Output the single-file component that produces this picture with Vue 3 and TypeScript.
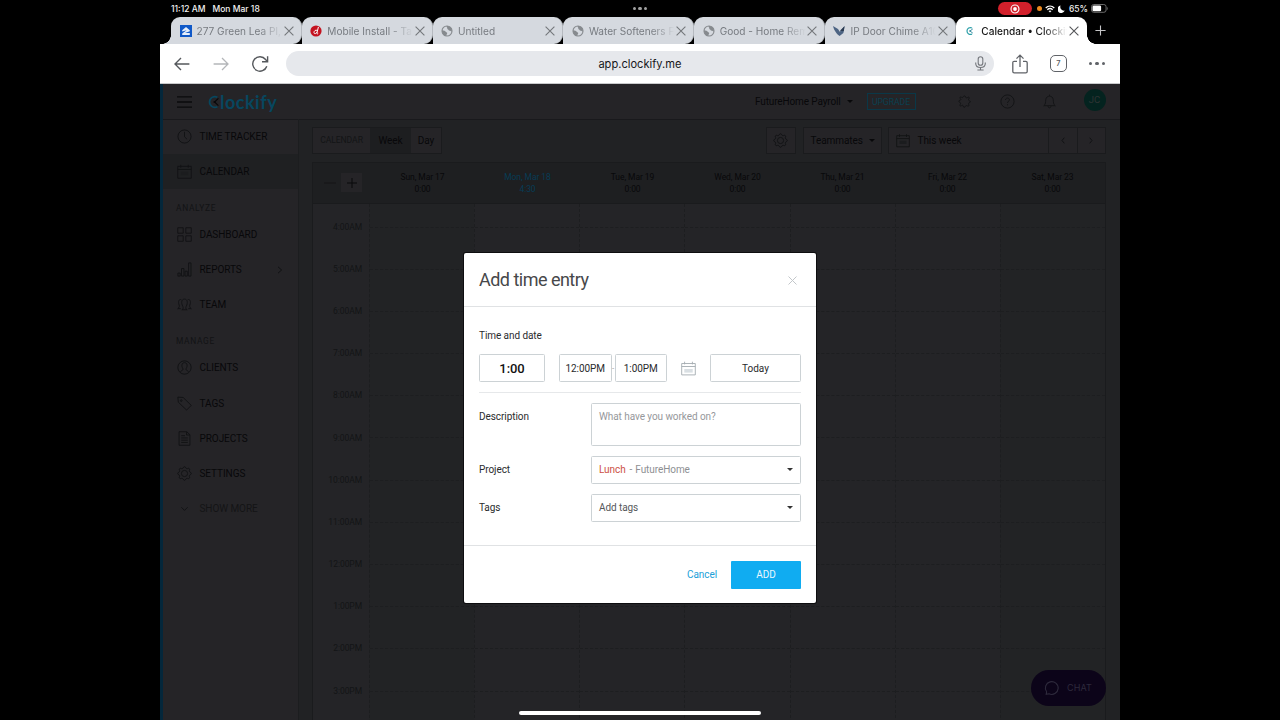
<script setup lang="ts">
interface Tab { title: string; icon: string; active?: boolean }
interface NavItem { label: string; icon: string; active?: boolean; arrow?: boolean; muted?: boolean }
interface NavGroup { heading?: string; items: NavItem[] }
interface Day { name: string; total: string; today?: boolean; weekend?: boolean }

const tabs: Tab[] = [
  { title: '277 Green Lea Pl,', icon: 'home' },
  { title: 'Mobile Install - Ta', icon: 'install' },
  { title: 'Untitled', icon: 'globe' },
  { title: 'Water Softeners F', icon: 'globe' },
  { title: 'Good - Home Rem', icon: 'globe' },
  { title: 'IP Door Chime A10', icon: 'bird' },
  { title: 'Calendar • Clockif', icon: 'clockify', active: true },
]

const groups: NavGroup[] = [
  { items: [{ label: 'TIME TRACKER', icon: 'clock' }, { label: 'CALENDAR', icon: 'calendar', active: true }] },
  {
    heading: 'ANALYZE',
    items: [
      { label: 'DASHBOARD', icon: 'grid' },
      { label: 'REPORTS', icon: 'bars', arrow: true },
      { label: 'TEAM', icon: 'team' },
    ],
  },
  {
    heading: 'MANAGE',
    items: [
      { label: 'CLIENTS', icon: 'client' },
      { label: 'TAGS', icon: 'tag' },
      { label: 'PROJECTS', icon: 'doc' },
      { label: 'SETTINGS', icon: 'gear' },
      { label: 'SHOW MORE', icon: 'down', muted: true },
    ],
  },
]

const days: Day[] = [
  { name: 'Sun, Mar 17', total: '0:00', weekend: true },
  { name: 'Mon, Mar 18', total: '4:30', today: true },
  { name: 'Tue, Mar 19', total: '0:00' },
  { name: 'Wed, Mar 20', total: '0:00' },
  { name: 'Thu, Mar 21', total: '0:00' },
  { name: 'Fri, Mar 22', total: '0:00' },
  { name: 'Sat, Mar 23', total: '0:00', weekend: true },
]

const hours: string[] = ['4:00AM', '5:00AM', '6:00AM', '7:00AM', '8:00AM', '9:00AM', '10:00AM', '11:00AM', '12:00PM', '1:00PM', '2:00PM', '3:00PM']

const gearPath = 'M8 .8 C9.2 .8 9 2.3 10.2 2.7 C11.4 3.2 12.3 1.9 13.1 2.8 C14 3.7 12.8 4.6 13.3 5.8 C13.7 7 15.2 6.8 15.2 8 C15.2 9.2 13.7 9 13.3 10.2 C12.8 11.4 14 12.3 13.1 13.1 C12.3 14 11.4 12.8 10.2 13.3 C9 13.7 9.2 15.2 8 15.2 C6.8 15.2 7 13.7 5.8 13.3 C4.6 12.8 3.7 14 2.8 13.1 C1.9 12.3 3.2 11.4 2.7 10.2 C2.3 9 .8 9.2 .8 8 C.8 6.8 2.3 7 2.7 5.8 C3.2 4.6 1.9 3.7 2.8 2.8 C3.7 1.9 4.6 3.2 5.8 2.7 C7 2.3 6.8 .8 8 .8Z'
const personPath = 'M8 2.8 C5.6 2.8 4.9 5 5.3 6.8 C5.6 8.4 6.6 9 6.3 10.3 C6 11.3 4.6 11.3 3.6 12.4 M8 2.8 C10.4 2.8 11.1 5 10.7 6.8 C10.4 8.4 9.4 9 9.7 10.3 C10 11.3 11.4 11.3 12.4 12.4'
</script>

<template>
  <div class="stage">
    <div class="device">
      <div class="status">
        <div class="status-left"><span>11:12 AM</span><span>Mon Mar 18</span></div>
        <div class="dots3"><i></i><i></i><i></i></div>
        <div class="status-right">
          <span class="rec">
            <svg width="10" height="10" viewBox="0 0 10 10"><circle cx="5" cy="5" r="4" fill="none" stroke="#fff" stroke-width="1.1" /><circle cx="5" cy="5" r="1.9" fill="#fff" /></svg>
          </span>
          <span class="orange"></span>
          <svg class="wifi" width="10" height="8" viewBox="0 0 10 8"><path d="M.7 2.9 C3.2 .6 6.8 .6 9.3 2.9 M2.3 4.7 C3.9 3.3 6.1 3.3 7.7 4.7" fill="none" stroke="#fff" stroke-width="1.3" /><path d="M3.5 5.9 C4.4 5.2 5.6 5.2 6.5 5.9 L5 7.5 Z" fill="#fff" /></svg>
          <svg class="moon" width="7" height="8" viewBox="0 0 7 8"><path d="M2.6 .5 A3.8 3.8 0 1 0 6.8 5.6 A3.7 3.7 0 0 1 2.6 .5" fill="#fff" /></svg>
          <span class="pct">65%</span>
          <svg width="18" height="9" viewBox="0 0 18 9"><rect x=".5" y=".5" width="14.6" height="7.8" rx="2.3" fill="none" stroke="#6b6b6b" /><rect x="1.5" y="1.5" width="8.6" height="5.8" rx="1.3" fill="#fff" /><path d="M16.3 3 V6 C17.3 5.6 17.3 3.4 16.3 3" fill="#6b6b6b" /></svg>
        </div>
      </div>

      <div class="tabs">
        <div v-for="tab in tabs" :key="tab.title" class="tab" :class="{ active: tab.active }">
          <svg v-if="tab.icon === 'home'" class="fav" viewBox="0 0 12 12"><rect width="12" height="12" fill="#1059c8" /><path d="M2.2 5.2 L6 2 L9.8 5.2 V6.2 L5 8 H9.8 V10 H2.2 V8.4 L6.6 5.3 L2.2 6.6Z" fill="#e7effb" /></svg>
          <svg v-else-if="tab.icon === 'install'" class="fav" viewBox="0 0 12 12"><circle cx="6" cy="6" r="5.6" fill="#c4121f" /><path d="M8.4 2 L6.9 8.1 C6.8 9 7.6 9 8.2 8.4 M7.2 5.5 C5.7 4.4 3.9 6 4 7.7 C4.2 9.3 6.3 8.8 7 7" fill="none" stroke="#fff" stroke-width="1" /></svg>
          <svg v-else-if="tab.icon === 'globe'" class="fav" viewBox="0 0 12 12"><circle cx="6" cy="6" r="5" fill="none" stroke="#868a8e" stroke-width="1.1" /><path d="M1 5.2 C2.8 5.4 4.2 5.6 4.5 6.6 C4.7 7.5 6 7 6.2 8 C6.3 9 5.3 9.2 5.4 11 C2.6 10.8 .8 8.3 1 5.2Z M5.6 1 C5.2 2.2 6.5 2.5 6.3 3.5 C6 4.5 7.3 4.2 7.5 5.1 C7.8 6.2 9.6 5.6 10.8 6.8 C11.5 3.5 8.8 .8 5.6 1Z" fill="#868a8e" /></svg>
          <svg v-else-if="tab.icon === 'bird'" class="fav" viewBox="0 0 12 12"><path d="M0 1 L5 4 L6.8 6.8 L11.5 1.2 L10.4 8 L6.6 11 C4 9 1.5 6.6 0 1Z" fill="#4d6483" /><path d="M7 5.8 L11.6 1 L10.8 6.2Z" fill="#2b3b52" /></svg>
          <svg v-else class="fav" viewBox="0 0 12 12"><path d="M8 3 A3.4 3.4 0 1 0 8 9" fill="none" stroke="#2a9fa8" stroke-width="1.2" /><path d="M6 6 L8.8 3.9 M6 6 L8.8 8.1" stroke="#3b8fa5" stroke-width="1" /><circle cx="5.9" cy="6" r=".8" fill="#347b8d" /></svg>
          <span class="tab-title">{{ tab.title }}</span>
          <svg class="tab-x" viewBox="0 0 10 10"><path d="M.6 .6 L9.4 9.4 M9.4 .6 L.6 9.4" /></svg>
        </div>
        <svg class="plus" viewBox="0 0 11 11"><path d="M5.5 .4 V10.6 M.4 5.5 H10.6" stroke="#c4c4c6" stroke-width="1.1" /></svg>
      </div>

      <div class="toolbar">
        <svg class="t-back" width="16" height="14" viewBox="0 0 16 14"><path d="M15.4 7 H1 M7 1 L1 7 L7 13" fill="none" stroke="#55585c" stroke-width="1.4" /></svg>
        <svg class="t-fwd" width="16" height="14" viewBox="0 0 16 14"><path d="M.6 7 H15 M9 1 L15 7 L9 13" fill="none" stroke="#b4b6b9" stroke-width="1.3" /></svg>
        <svg class="t-reload" width="18" height="18" viewBox="0 0 18 18"><path d="M15.8 11.2 A7.2 7.2 0 1 1 14.6 4.5 L16.4 6.6 M16.6 1.2 V6.8 H11" fill="none" stroke="#55585c" stroke-width="1.4" /></svg>
        <div class="address">
          <span>app.clockify.me</span>
          <svg class="mic" width="11" height="15" viewBox="0 0 11 15"><rect x="3.2" y=".7" width="4.6" height="8.6" rx="2.3" fill="none" stroke="#74777c" stroke-width="1.1" /><path d="M.7 6.4 V7.2 C.7 13 10.3 13 10.3 7.2 V6.4 M5.5 11.5 V14 M2.4 14 H8.6" fill="none" stroke="#74777c" stroke-width="1.1" /></svg>
        </div>
        <svg class="t-share" width="16" height="20" viewBox="0 0 16 20"><path d="M5 7.3 H2.2 Q.8 7.3 .8 8.7 V17.4 Q.8 18.8 2.2 18.8 H13.8 Q15.2 18.8 15.2 17.4 V8.7 Q15.2 7.3 13.8 7.3 H11 M8 13 V1.2 M4.5 4.6 L8 1.1 L11.5 4.6" fill="none" stroke="#606368" stroke-width="1.3" /></svg>
        <span class="t-count">7</span>
        <span class="t-more"><i></i><i></i><i></i></span>
      </div>

      <div class="app">
        <div class="strip"></div>
        <div class="app-main">
          <header class="topbar">
            <svg class="burger" width="15" height="12" viewBox="0 0 15 12"><path d="M0 .8 H15 M0 6 H15 M0 11.2 H15" stroke="#0a0a0d" stroke-width="1.3" /></svg>
            <div class="logo">
              <svg width="13" height="14" viewBox="0 0 13 14"><path d="M9.4 2.2 A5.4 5.4 0 1 0 9.4 11.8" fill="none" stroke="#07475f" stroke-width="1.7" /><path d="M6.6 7 L10.4 3.4 M6.6 7 L10.4 10.6" stroke="#08090b" stroke-width="1.1" /><circle cx="6.4" cy="7" r="1" fill="#08090b" /></svg>
              <span>lockify</span>
            </div>
            <span class="workspace">FutureHome Payroll</span>
            <i class="caret ws-caret"></i>
            <span class="upgrade">UPGRADE</span>
            <div class="top-icons">
              <svg class="puzzle" width="13" height="13" viewBox="0 0 13 13"><path d="M2 2.2 C3.2 1.4 4 3.4 5 2.3 C5.4 1.2 6 .6 7 1 C8 1.5 7.3 2.8 8.4 2.8 C9.6 2.8 10.6 1.6 11.2 2.4 C11.8 3.3 10 4.2 10.6 5.2 C11.1 6 12.4 5.6 12.3 6.8 C12.2 8 10.8 7.4 10.5 8.5 C10.3 9.6 11.4 10.2 10.7 11 C9.9 11.8 9 10.2 8 10.6 C7 11 7.3 12.4 6.2 12.3 C5 12.2 5.8 10.8 4.8 10.4 C3.8 10 2.8 11.6 2 10.8 C1.3 10 3 9 2.6 8 C2.2 7 .7 7.2 .8 6.2 C.9 5 2.4 5.8 2.8 4.7 C3.1 3.8 1.2 3 2 2.2Z" fill="none" stroke="#141517" /></svg>
              <svg class="help" width="15" height="15" viewBox="0 0 15 15"><circle cx="7.5" cy="7.5" r="6.6" fill="none" stroke="#141517" /><path d="M5.5 6 C5.5 3.3 9.6 3.5 9.4 6 C9.3 7.3 7.5 7.3 7.5 9 M7.5 10.2 V11.3" fill="none" stroke="#141517" /></svg>
              <svg class="bell" width="13" height="15" viewBox="0 0 13 15"><path d="M.8 11.7 C2.9 10.5 2.4 8 2.8 5.4 C3.3 1.1 9.7 1.1 10.2 5.4 C10.6 8 10.1 10.5 12.2 11.7Z M5 12.2 C5.2 14.4 7.8 14.4 8 12.2 M6.5 .6 V2" fill="none" stroke="#141517" /></svg>
              <span class="avatar">JC</span>
            </div>
          </header>

          <div class="body">
            <nav class="side">
              <div v-for="(group, gi) in groups" :key="gi">
                <div v-if="group.heading" class="heading">{{ group.heading }}</div>
                <div v-for="item in group.items" :key="item.label" class="nav" :class="{ on: item.active, muted: item.muted }">
                  <svg class="nav-icon" viewBox="0 0 16 16">
                    <template v-if="item.icon === 'clock'"><circle cx="8" cy="8" r="7" /><path d="M8 3 V8.3 L10.8 11" /></template>
                    <template v-else-if="item.icon === 'calendar'"><path d="M.8 2.5 H15.2 V15.2 H.8Z M.8 5.8 H15.2 M4 .8 V4 M12 .8 V4" /><rect x="4" y="8.2" width="8" height="3.8" class="soft" /></template>
                    <path v-else-if="item.icon === 'grid'" d="M.8 .8 H6.6 V6.6 H.8Z M9.4 .8 H15.2 V6.6 H9.4Z M.8 9.4 H6.6 V15.2 H.8Z M9.4 9.4 H15.2 V15.2 H9.4Z" />
                    <path v-else-if="item.icon === 'bars'" d="M1 11.8 H3.4 V15 H1Z M4.8 7 H7.4 V15 H4.8Z M8.6 9.8 H11 V15 H8.6Z M12.4 1 H14.9 V15 H12.4Z" />
                    <path v-else-if="item.icon === 'team'" d="M5.2 13.6 C6.6 12.8 7 12 6.2 10 C4 6 5 2.2 8 2.2 C11 2.2 12 6 9.8 10 C9 12 9.4 12.8 10.8 13.6Z M4.6 2.8 C2 2 .8 5 2.3 8.5 C3 10.6 2 11.4 .8 12.4 H4 M11.4 2.8 C14 2 15.2 5 13.7 8.5 C13 10.6 14 11.4 15.2 12.4 H12" />
                    <template v-else-if="item.icon === 'client'"><circle cx="8" cy="8" r="7.1" /><path :d="personPath" /></template>
                    <template v-else-if="item.icon === 'tag'"><path d="M.9 1.2 L6.6 1.6 L15.2 10 L10.2 15 L1.4 6.6Z" /><circle cx="4.5" cy="4.9" r=".9" /></template>
                    <path v-else-if="item.icon === 'doc'" d="M2.2 .8 H10.4 L13.8 4 V15.2 H2.2Z M10.2 1 V4.3 H13.6 M4.5 5 H8.5 M4.5 7.4 H11.5 M4.5 9.8 H11.5 M4.5 12.2 H11.5" />
                    <template v-else-if="item.icon === 'gear'"><path :d="gearPath" /><circle cx="8" cy="8" r="3.3" /></template>
                    <path v-else d="M4.6 6.6 L8 10 L11.4 6.6" />
                  </svg>
                  <span>{{ item.label }}</span>
                  <svg v-if="item.arrow" class="nav-arrow" viewBox="0 0 6 8"><path d="M1 .8 L4.6 4 L1 7.2" /></svg>
                </div>
              </div>
            </nav>

            <main class="content">
              <div class="controls">
                <div class="seg">
                  <span class="seg-cal">CALENDAR</span><span class="seg-week">Week</span><span class="seg-day">Day</span>
                </div>
                <div class="ctl ctl-gear"><svg width="15" height="15" viewBox="0 0 16 16"><path :d="gearPath" /><circle cx="8" cy="8" r="3.3" /></svg></div>
                <div class="ctl ctl-team">Teammates<i class="caret"></i></div>
                <div class="range">
                  <div class="range-main"><svg width="14" height="15" viewBox="0 0 16 16"><path d="M.8 2.5 H15.2 V15.2 H.8Z M.8 5.8 H15.2 M4 .8 V4 M12 .8 V4" /><rect x="4" y="8.2" width="8" height="3.8" class="soft" /></svg>This week</div>
                  <div class="range-step"><svg width="4" height="7" viewBox="0 0 4 7"><path d="M3.3 .7 L1 3.5 L3.3 6.3" /></svg></div>
                  <div class="range-step"><svg width="4" height="7" viewBox="0 0 4 7"><path d="M.7 .7 L3 3.5 L.7 6.3" /></svg></div>
                </div>
              </div>

              <div class="calendar">
                <div class="cal-head">
                  <div class="zoomer">
                    <svg width="12" height="10" viewBox="0 0 12 10"><path d="M0 5 H12" stroke="#141517" /></svg>
                    <span><svg width="10" height="10" viewBox="0 0 10 10"><path d="M0 5 H10 M5 0 V10" stroke="#09090b" /></svg></span>
                  </div>
                  <div v-for="day in days" :key="day.name" class="day" :class="{ today: day.today }">
                    <span>{{ day.name }}</span><span>{{ day.total }}</span>
                  </div>
                </div>
                <div class="cal-body">
                  <div class="hours"><span v-for="hour in hours" :key="hour">{{ hour }}</span></div>
                  <div v-for="day in days" :key="day.name" class="col" :class="{ weekend: day.weekend }"><i v-for="hour in hours" :key="hour"></i></div>
                </div>
              </div>
            </main>
          </div>
        </div>

        <div class="chat">
          <svg width="16" height="16" viewBox="0 0 16 16"><path d="M2.2 14.3 L2.6 11.8 A6.4 6.4 0 1 1 5 13.8 Z" fill="none" stroke="#2e2a3c" stroke-width="1.1" /></svg>
          <span>CHAT</span>
        </div>

        <section class="modal">
          <div class="m-head">
            <h1>Add time entry</h1>
            <svg width="9" height="9" viewBox="0 0 9 9"><path d="M.5 .5 L8.5 8.5 M8.5 .5 L.5 8.5" stroke="#c3c7ca" stroke-width="1" /></svg>
          </div>
          <div class="m-body">
            <div class="m-label">Time and date</div>
            <div class="m-time">
              <span class="box dur">1:00</span>
              <span class="box start">12:00PM</span>
              <span class="dash">-</span>
              <span class="box end">1:00PM</span>
              <svg class="m-cal" width="15" height="15" viewBox="0 0 15 15"><path d="M.7 2.5 H14.3 V13.9 H.7Z M.7 5.5 H14.3 M3.6 .7 V3.4 M11.4 .7 V3.4" fill="none" stroke="#a4abb0" stroke-width=".9" /><rect x="3.3" y="8" width="8.4" height="3.6" fill="#d9dfe3" /></svg>
              <span class="box today-box">Today</span>
            </div>
            <div class="m-row"><label>Description</label><div class="box field area">What have you worked on?</div></div>
            <div class="m-row"><label>Project</label><div class="box field"><span class="lunch">Lunch</span><span class="client">-</span><span class="client">FutureHome</span><i class="caret"></i></div></div>
            <div class="m-row"><label>Tags</label><div class="box field tagf">Add tags<i class="caret"></i></div></div>
          </div>
          <div class="m-foot"><span class="cancel">Cancel</span><button>ADD</button></div>
        </section>
        <div class="home-bar"></div>
      </div>
    </div>
  </div>
</template>

<style>
html, body { margin: 0; background: #000; overflow: hidden; }
</style>

<style scoped>
* { box-sizing: border-box; }
.stage { width: 1280px; height: 720px; background: #000; display: flex; justify-content: center; overflow: hidden; }
.device { width: 960px; height: 720px; display: flex; flex-direction: column; font-family: Inter, "Liberation Sans", sans-serif; }
svg { display: block; flex: none; }
.status { height: 17px; flex: none; display: grid; grid-template-columns: 1fr 15px 1fr; align-items: center; color: #f2f2f2; font-size: 8.5px; font-weight: 500; padding-right: 11px; padding-left: 11px; }
.status-left { display: flex; gap: 7px; white-space: nowrap; }
.dots3 { display: flex; gap: 2.6px; justify-content: center; }
.dots3 i { width: 3.4px; height: 3.4px; border-radius: 50%; background: #a0a0a0; }
.status-right { display: flex; align-items: center; justify-content: flex-end; }
.rec { width: 34px; height: 13px; border-radius: 7px; background: #d2202b; display: flex; align-items: center; justify-content: center; margin-right: 4.5px; }
.orange { width: 5px; height: 5px; border-radius: 50%; background: #ec8a1f; margin-right: 3.5px; }
.wifi { margin-right: 3px; }
.moon { margin-right: 3.5px; }
.pct { margin-right: 3px; }

.tabs { height: 27px; flex: none; display: flex; padding-left: 11px; align-items: center; }
.tab { position: relative; width: 130.8px; height: 27px; flex: none; display: flex; align-items: center; padding: 1px 7px 0 8.5px; background: #d5d9df; color: #777b80; font-size: 10.1px; border-radius: 9px 9px 9px 0; border-right: 1px solid #b5b9bf; }
.tab.active { background: #fff; color: #151515; font-weight: 500; border-right: 0; border-radius: 9px 9px 0 0; padding-right: 8px; }
.tab.active::after { content: ""; position: absolute; right: -9px; bottom: 0; width: 9px; height: 9px; background: radial-gradient(circle at 100% 0, transparent 8.6px, #fff 9px); }
.tab:first-child::before { content: ""; position: absolute; left: -9px; bottom: 0; width: 9px; height: 9px; background: radial-gradient(circle at 0 0, transparent 8.6px, #d5d9df 9px); }
.fav { width: 12px; height: 12px; margin-right: 5px; }
.tab-title { width: 86px; flex: none; white-space: nowrap; -webkit-mask-image: linear-gradient(90deg, #000 72%, transparent 100%); mask-image: linear-gradient(90deg, #000 72%, transparent 100%); }
.tab-x { width: 10px; height: 10px; margin-left: auto; }
.tab-x path { stroke: #74777b; stroke-width: 1.1; }
.active .tab-x path { stroke: #55575a; }
.plus { width: 11px; height: 11px; margin-left: 8px; }

.toolbar { height: 40px; flex: none; background: #fff; border-bottom: 1px solid #c9cacc; display: flex; align-items: center; padding: 0 15px 0 14px; }
.t-fwd { margin-left: 23px; }
.t-reload { margin-left: 22px; }
.address { position: relative; width: 708px; height: 25px; border-radius: 13px; background: #e6e8ec; margin-left: 17px; display: flex; align-items: center; justify-content: center; color: #16171a; font-size: 11.1px; }
.mic { position: absolute; right: 8px; top: 5px; }
.t-share { margin-left: 18px; }
.t-count { width: 17px; height: 17px; border: 1.4px solid #606368; border-radius: 5px; margin-left: 22px; font-size: 7.5px; font-weight: 500; color: #55585c; display: flex; align-items: center; justify-content: center; }
.t-more { display: flex; gap: 3px; margin-left: 22px; }
.t-more i { width: 3.4px; height: 3.4px; border-radius: 50%; background: #606368; }

.app { position: relative; flex: 1; min-height: 0; display: flex; background: #252427; font-family: Roboto, "Liberation Sans", sans-serif; color: #08080a; font-size: 10px; letter-spacing: -.07px; overflow: hidden; }
.strip { width: 2.5px; flex: none; background: #04273b; }
.app-main { flex: 1; display: flex; flex-direction: column; }
.topbar { height: 36px; flex: none; display: flex; align-items: center; border-bottom: 1px solid #19191c; padding-left: 14.5px; }
.logo { display: flex; align-items: center; width: 70px; margin-left: 16px; color: #07475f; }
.logo span { font-family: Lato, sans-serif; font-weight: 700; font-size: 18px; line-height: 20px; letter-spacing: .5px; margin-left: -1px; }
.workspace { margin-left: 477px; width: 87px; white-space: nowrap; letter-spacing: -.13px; }
.caret { width: 0; height: 0; border: 3px solid transparent; border-top: 3.2px solid currentColor; border-bottom: 0; }
.ws-caret { margin-left: 4.5px; }
.upgrade { margin-left: 14px; width: 49px; height: 17px; border: 1px solid #0a3848; color: #0a4050; display: flex; align-items: center; justify-content: center; font-size: 8.7px; }
.top-icons { display: flex; align-items: center; }
.puzzle { margin-left: 42px; }
.help { margin-left: 29px; }
.bell { margin-left: 28px; }
.avatar { margin-left: 28px; margin-top: -4px; width: 22px; height: 22px; border-radius: 50%; background: #04231f; color: #2f3434; display: flex; align-items: center; justify-content: center; font-size: 9.5px; }

.body { flex: 1; min-height: 0; display: flex; }
.side { width: 136.5px; flex: none; border-right: 1px solid #1c1d1f; margin-top: -1.3px; }
.nav { height: 35.15px; display: flex; align-items: center; padding-left: 14.5px; }
.nav.on { background: #1f2022; }
.nav-icon { width: 15px; height: 15px; margin-right: 7.5px; }
.nav-icon, .nav-arrow, .ctl svg, .range svg { fill: none; stroke: #111214; stroke-width: 1; }
.nav-icon .soft, .range .soft { fill: #1b1c1e; stroke: none; }
.nav-arrow { width: 6px; height: 8px; margin-left: auto; margin-right: 15px; }
.nav.muted { color: #141416; }
.heading { height: 28px; padding: 13px 0 0 13.5px; font-size: 8.4px; line-height: 12px; letter-spacing: .7px; color: #121315; }

.content { flex: 1; background: #212224; padding: 6.5px 14px 0 13px; display: flex; flex-direction: column; }
.controls { height: 27px; flex: none; display: flex; }
.seg { display: flex; border: 1px solid #1a1b1d; background: #252427; width: 130px; margin-right: auto; }
.seg span { display: flex; align-items: center; justify-content: center; }
.seg-cal { width: 57px; font-size: 8.6px; color: #131416; }
.seg-week { width: 41px; background: #1d1e20; }
.seg-day { flex: 1; }
.ctl, .range { border: 1px solid #1a1b1d; background: #252427; display: flex; align-items: center; }
.ctl-gear { width: 30px; justify-content: center; margin-right: 7px; }
.ctl-team { width: 79px; padding-left: 7px; gap: 6px; margin-right: 6.5px; }
.range { width: 218px; }
.range-main { flex: 1; display: flex; align-items: center; gap: 7.5px; padding-left: 7px; }
.range-step { width: 28.5px; height: 100%; border-left: 1px solid #1a1b1d; display: flex; align-items: center; justify-content: center; }

.calendar { margin-top: 8px; flex: 1; border: 1px solid #1a1b1d; border-bottom: 0; display: flex; flex-direction: column; min-height: 0; background: #242427; overflow: hidden; }
.cal-head { height: 41px; flex: none; background: #1e1f21; border-bottom: 1px solid #1a1b1d; display: flex; }
.zoomer { width: 57px; display: flex; align-items: center; padding-left: 11px; gap: 5px; }
.zoomer span { width: 21px; height: 19px; background: #252427; display: flex; align-items: center; justify-content: center; }
.day { flex: 1; display: flex; flex-direction: column; align-items: center; justify-content: center; font-size: 8.5px; line-height: 12px; }
.day.today { color: #073c55; }
.cal-body { display: flex; flex: 1; }
.hours { width: 56px; display: flex; flex-direction: column; align-items: flex-end; padding: 2px 7px 0 0; font-size: 8.5px; color: #131416; }
.hours span { height: 42.2px; flex: none; display: flex; align-items: center; }
.col { flex: 1; border-left: 1px dashed #1d1e20; padding-top: 23px; }
.col.weekend { background: #222325; }
.col i { display: block; height: 42.2px; border-top: 1px dashed #1d1e20; }

.chat { position: absolute; left: 871px; top: 585.5px; width: 75px; height: 36px; border-radius: 18px; background: #0c0419; color: #2e2a3c; display: flex; align-items: center; padding-left: 13px; gap: 7px; font-family: Inter, sans-serif; font-size: 9px; letter-spacing: .1px; }

.modal { position: absolute; left: 304px; top: 169px; width: 352px; height: 350px; background: #fff; border-radius: 2px; box-shadow: 0 0 0 1px #0d0d0f; display: flex; flex-direction: column; color: #2a2b2d; font-size: 10px; letter-spacing: -.07px; }
.m-head { height: 54px; border-bottom: 1.5px solid #e0e2e4; display: flex; align-items: center; justify-content: space-between; padding: 1px 19.5px 0 15px; }
.m-head h1 { margin: 0; font-size: 18px; line-height: 22px; font-weight: 400; letter-spacing: -.52px; color: #47484a; }
.m-body { flex: 1; padding: 22px 15px 0; }
.m-label { height: 13px; line-height: 13px; }
.m-time { display: flex; align-items: center; margin-top: 12px; padding-bottom: 10px; border-bottom: 1px solid #e6e8ea; height: 39px; }
.box { height: 28px; border: 1px solid #ccd2d5; border-radius: 1.5px; display: flex; align-items: center; justify-content: center; }
.dur { width: 66px; font-weight: 500; font-size: 13px; color: #111; }
.start { width: 52.5px; margin-left: 14px; }
.dash { width: 3px; color: #999; font-size: 8px; text-align: center; }
.end { width: 52.5px; }
.m-cal { margin-left: 13.5px; }
.today-box { width: 91px; margin-left: auto; letter-spacing: 0; }
.m-row { display: flex; margin-top: 10px; }
.m-row label { width: 112px; line-height: 28px; }
.field { flex: 1; justify-content: flex-start; padding: 0 7px 1px; }
.area { height: 43px; align-items: flex-start; padding-top: 7px; color: #96989b; }
.lunch { color: #cc5144; margin-right: 4px; }
.client { color: #8e9093; margin-right: 3px; }
.tagf { color: #55575a; }
.field .caret { margin-left: auto; color: #333; }
.m-foot { height: 58px; border-top: 1.5px solid #e0e2e4; display: flex; align-items: center; justify-content: flex-end; padding-right: 15px; }
.cancel { color: #22a0d8; margin-right: 14px; }
.m-foot button { width: 70px; height: 28px; border: 0; border-radius: 1px; background: #10acf1; color: #e9f7fe; font: inherit; padding: 0; }
.home-bar { position: absolute; left: 359px; top: 627px; width: 242px; height: 4px; border-radius: 2px; background: #fff; }
</style>
